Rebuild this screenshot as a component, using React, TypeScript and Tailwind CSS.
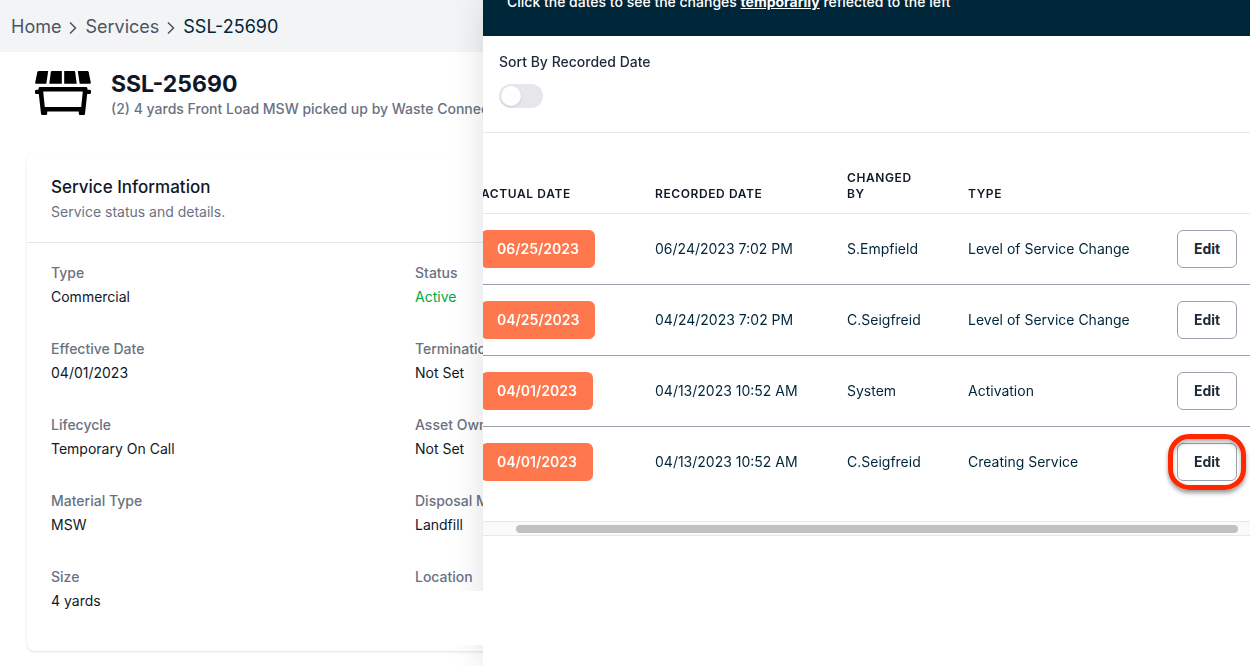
import React from 'react';

const details = [
  { label: 'Type', value: 'Commercial' },
  { label: 'Status', value: 'Active', active: true },
  { label: 'Effective Date', value: '04/01/2023' },
  { label: 'Termination Date', value: 'Not Set' },
  { label: 'Lifecycle', value: 'Temporary On Call' },
  { label: 'Asset Owner', value: 'Not Set' },
  { label: 'Material Type', value: 'MSW' },
  { label: 'Disposal Method', value: 'Landfill' },
  { label: 'Size', value: '4 yards' },
  { label: 'Location', value: '' },
];

const changes = [
  { actual: '06/25/2023', recorded: '06/24/2023 7:02 PM', by: 'S.Empfield', type: 'Level of Service Change' },
  { actual: '04/25/2023', recorded: '04/24/2023 7:02 PM', by: 'C.Seigfreid', type: 'Level of Service Change' },
  { actual: '04/01/2023', recorded: '04/13/2023 10:52 AM', by: 'System', type: 'Activation' },
  { actual: '04/01/2023', recorded: '04/13/2023 10:52 AM', by: 'C.Seigfreid', type: 'Creating Service', highlighted: true },
];

function Chevron() {
  return (
    <svg className="mt-0.5 size-4" viewBox="0 0 16 16" fill="none" stroke="currentColor" strokeWidth="1.5" aria-hidden="true">
      <path d="M5 2.5L10.5 8L5 13.5" />
    </svg>
  );
}

function ContainerIcon() {
  return (
    <svg className="mt-[3px] h-11 w-14 shrink-0" viewBox="0 0 56 44" fill="#000" aria-hidden="true">
      <path d="M3.6 0H13.2L11.3 12.8H1.2Q0 12.8 .2 11.5L2.3 1.2Q2.6 0 3.6 0Z" />
      <path d="M16.6 0H26.8V12.8H14.3L15.8.9Q16 0 16.6 0Z" />
      <path d="M29.2 0H39.4Q40 0 40.2.9L41.7 12.8H29.2Z" />
      <path d="M42.8 0H52.4Q53.4 0 53.7 1.2L55.8 11.5Q56 12.8 54.8 12.8H44.7Z" />
      <path
        fillRule="evenodd"
        d="M4.5 16H51.5Q52.5 16 52.6 18.8H54.6Q56 18.8 56 20.2V21.4Q56 22.9 54.6 22.9H52.2L50 42.8Q49.9 44 48.7 44H45Q43.8 44 43.8 42.8V40.6H12.2V42.8Q12.2 44 11 44H7.3Q6.1 44 6 42.8L3.8 22.9H1.4Q0 22.9 0 21.4V20.2Q0 18.8 1.4 18.8H3.4Q3.5 16 4.5 16ZM8.2 20.4L9.8 36H46.2L47.8 20.4Z"
      />
    </svg>
  );
}

function ServicePage() {
  return (
    <div className="min-w-0 flex-1">
      <nav aria-label="Breadcrumb" className="flex h-[52px] items-center gap-1 bg-gray-100 px-[11px] pt-0.5 text-lg text-gray-600">
        <a href="#home">Home</a>
        <Chevron />
        <a href="#services">Services</a>
        <Chevron />
        <a href="#service" aria-current="page" className="text-[#00263a]">SSL-25690</a>
      </nav>

      <header className="flex items-start gap-5 px-[35px] pt-4">
        <ContainerIcon />
        <div>
          <h1 className="pt-px text-[23px] leading-[30px] font-bold text-gray-900">SSL-25690</h1>
          <p className="text-sm font-medium whitespace-nowrap text-gray-500">
            (2) 4 yards Front Load MSW picked up by Waste Connections
          </p>
        </div>
      </header>

      <section className="mx-[27px] mt-[34px] mb-4 rounded-lg bg-white shadow">
        <div className="border-b border-gray-200 px-6 pt-5 pb-5">
          <h2 className="mb-px text-[17px] leading-7 font-medium text-gray-900">Service Information</h2>
          <p className="text-sm text-gray-500">Service status and details.</p>
        </div>
        <dl className="grid grid-cols-[364px_1fr] gap-y-8 px-6 pt-5 pb-1.5 text-sm">
          {details.map((item) => (
            <div key={item.label} className="flex flex-col gap-1">
              <dt className="font-medium text-gray-500">{item.label}</dt>
              {item.value ? (
                <dd className={item.active ? 'text-green-600' : 'text-gray-900'}>{item.value}</dd>
              ) : (
                <dd className="relative z-20 h-[54px] w-24 bg-white" />
              )}
            </div>
          ))}
        </dl>
      </section>
    </div>
  );
}

function ChangesDrawer() {
  return (
    <aside className="fixed inset-y-0 right-0 z-10 w-full max-w-[767px] bg-white shadow-[0_0_32px_rgba(0,0,0,0.13)]">
      <div className="flex h-9 items-end overflow-hidden bg-[#00263a] px-6 pb-6 text-sm font-medium text-white">
        <p>
          Click the dates to see the changes <span className="font-bold underline">temporarily</span> reflected to the left
        </p>
      </div>

      <div className="flex flex-col items-start gap-3 border-b border-gray-200 px-4 pt-4 pb-6">
        <label htmlFor="sort-recorded" className="text-sm font-medium text-gray-800">
          Sort By Recorded Date
        </label>
        <input
          id="sort-recorded"
          type="checkbox"
          role="switch"
          className="h-6 w-11 appearance-none rounded-full bg-gray-200 p-0.5 before:block before:size-5 before:rounded-full before:bg-white before:shadow checked:bg-[#00263a] checked:before:translate-x-5"
        />
      </div>

      <div className="overflow-hidden pb-6">
        <table className="-ml-0.5 w-[calc(100%+2px)] table-fixed border-separate border-spacing-0 text-left text-sm text-[#00263a]">
          <colgroup>
            <col className="w-[174px]" />
            <col className="w-[192px]" />
            <col className="w-[121px]" />
            <col />
            <col className="w-[73px]" />
          </colgroup>
          <thead className="text-xs font-semibold tracking-wider text-gray-900 uppercase">
            <tr className="align-bottom *:border-b *:border-gray-200 *:pt-[37px] *:pb-[11px] *:font-semibold">
              <th scope="col">Actual Date</th>
              <th scope="col">Recorded Date</th>
              <th scope="col">
                <span className="block w-20">Changed By</span>
              </th>
              <th scope="col">Type</th>
              <th scope="col"><span className="sr-only">Actions</span></th>
            </tr>
          </thead>
          <tbody>
            {changes.map((row, index) => (
              <tr key={index} className="*:border-b *:border-gray-400 *:py-4 last:*:border-b-0">
                <td>
                  <button type="button" className="block h-[38px] rounded-md bg-[#ff774c] px-4 font-semibold text-white">
                    {row.actual}
                  </button>
                </td>
                <td>{row.recorded}</td>
                <td>{row.by}</td>
                <td>{row.type}</td>
                <td>
                  <div className="relative w-[60px]">
                    <button
                      type="button"
                      className="block h-[38px] w-full rounded-md border border-gray-400 bg-white font-bold text-gray-800"
                    >
                      Edit
                    </button>
                    {row.highlighted && (
                      <span className="pointer-events-none absolute -inset-[9px] rounded-[21px] border-5 border-[#ff2600] shadow-[0_3px_4px_rgba(0,0,0,0.4),inset_0_3px_4px_rgba(0,0,0,0.3)]" />
                    )}
                  </div>
                </td>
              </tr>
            ))}
          </tbody>
        </table>
      </div>
      <div className="border-y border-gray-200 bg-gray-50 pt-[3px] pr-3 pb-0.5 pl-[33px]">
        <div className="h-2 rounded-full bg-[#c1c1c1]" />
      </div>
    </aside>
  );
}

export default function App() {
  return (
    <main className="flex min-h-screen overflow-hidden bg-white font-['Inter','Liberation_Sans',sans-serif]">
      <ServicePage />
      <ChangesDrawer />
    </main>
  );
}
